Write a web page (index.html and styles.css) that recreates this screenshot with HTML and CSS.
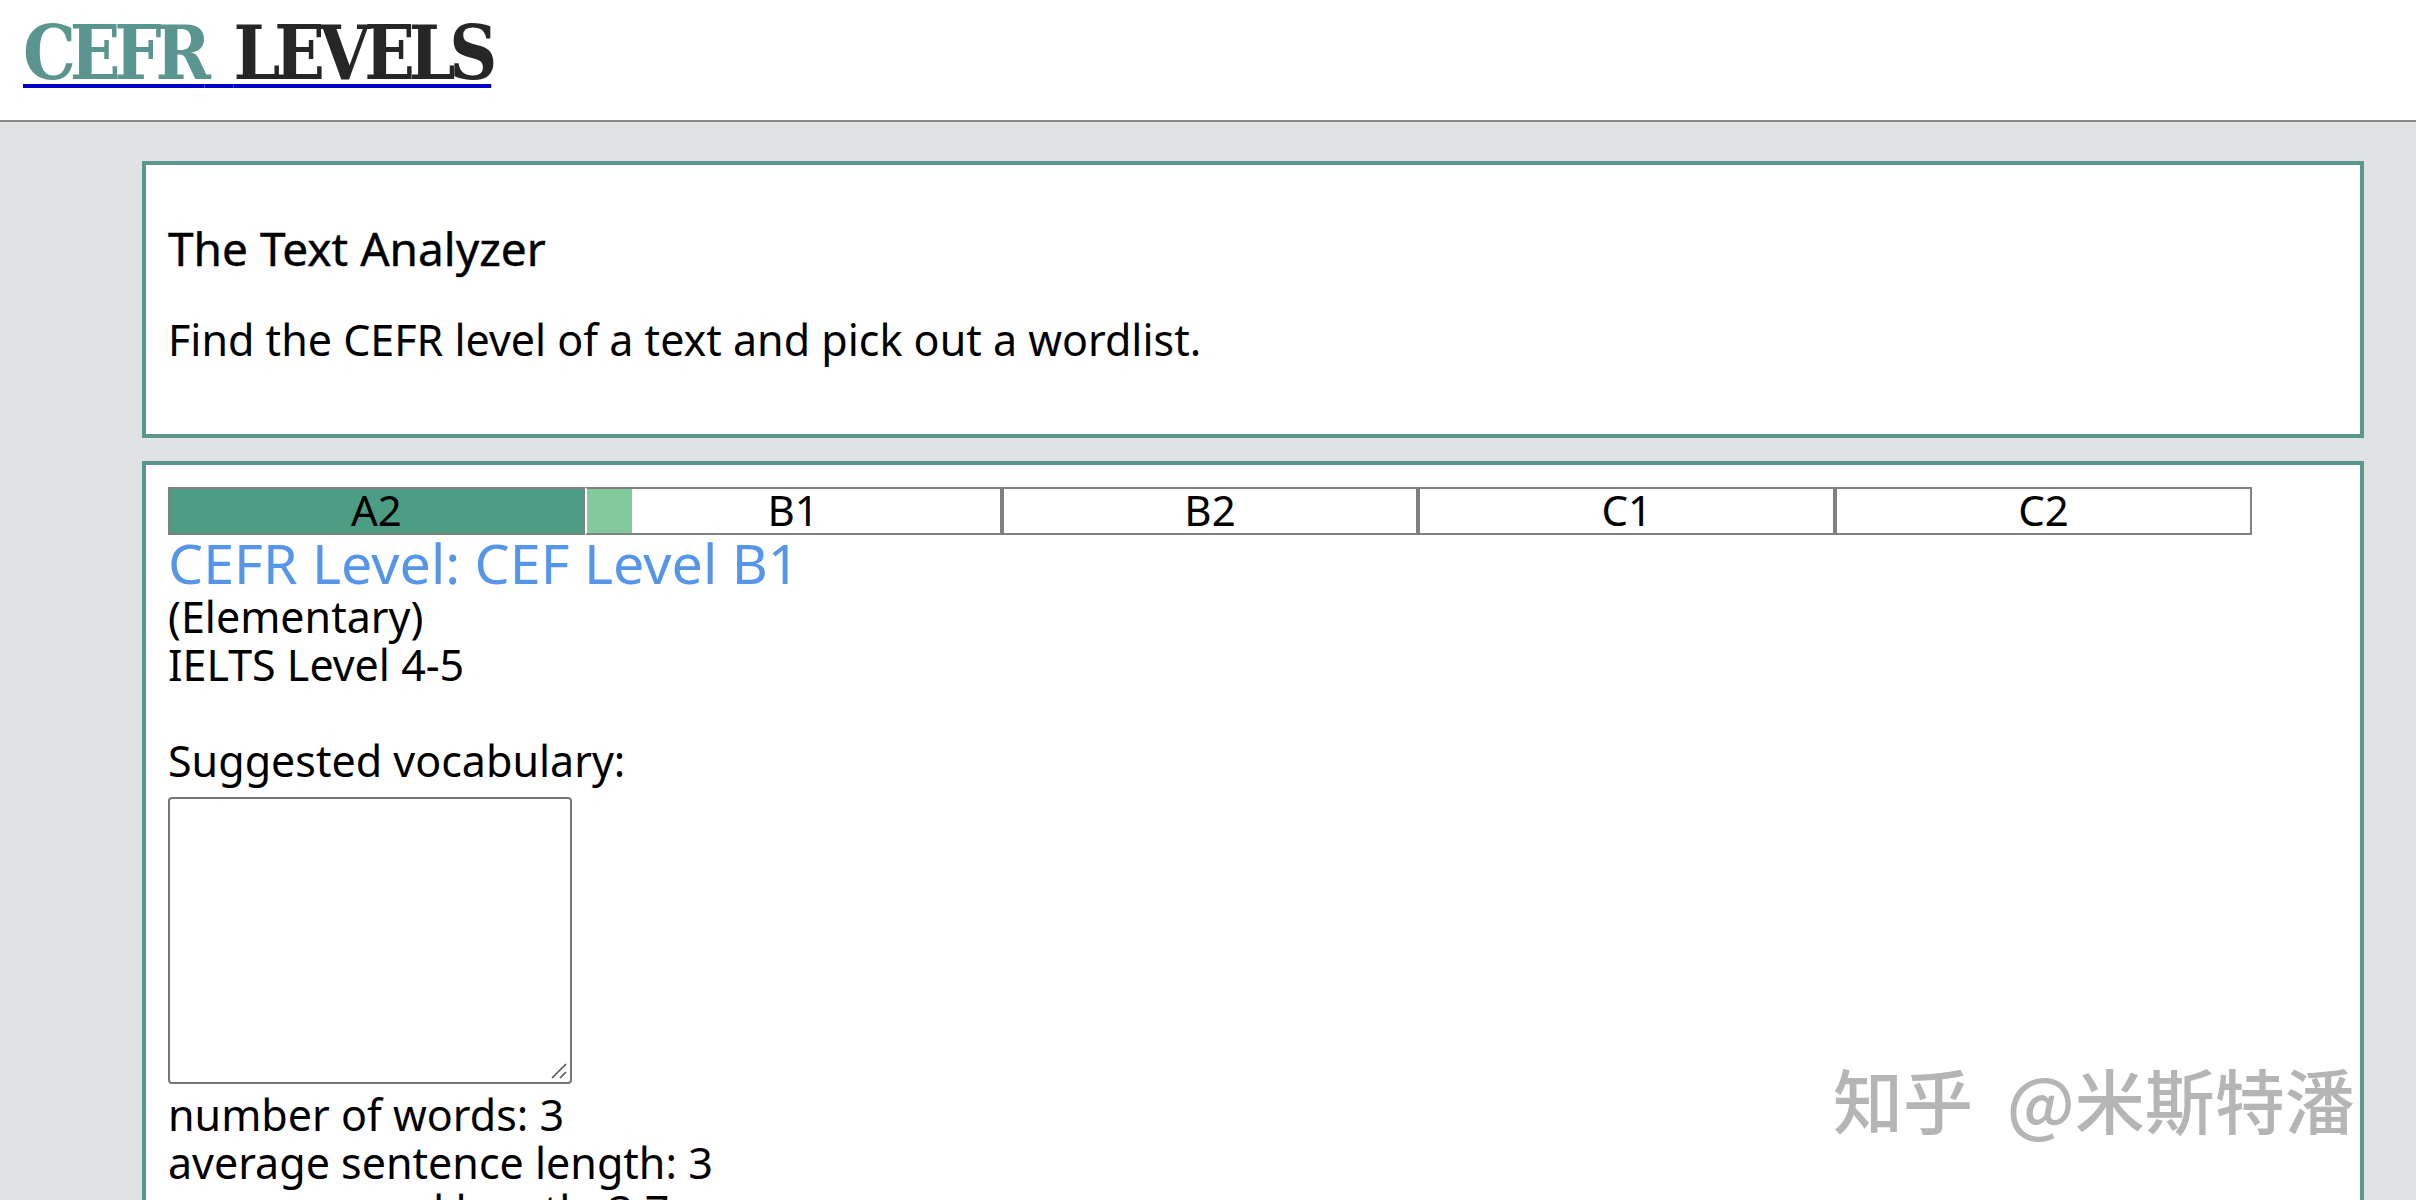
FILE: index.html
```html
<!DOCTYPE html>
<html lang="en">
<head>
<meta charset="utf-8">
<title>CEFR Levels - The Text Analyzer</title>
<link rel="stylesheet" href="styles.css">
</head>
<body>
<header class="site-header">
  <a class="logo" href="#"><span class="logo-a">CEFR</span> <span class="logo-b">LEVELS</span></a>
</header>
<main class="content">
  <section class="card intro">
    <h1 class="intro-title">The Text Analyzer</h1>
    <p class="intro-text">Find the CEFR level of a text and pick out a wordlist.</p>
  </section>
  <section class="card result">
    <div class="levels">
      <div class="level level-full">A2</div>
      <div class="level level-partial"><div class="level-fill"></div><span class="level-name">B1</span></div>
      <div class="level">B2</div>
      <div class="level">C1</div>
      <div class="level">C2</div>
    </div>
    <h2 class="result-title">CEFR Level: CEF Level B1</h2>
    <div>(Elementary)</div>
    <div>IELTS Level 4-5</div>
    <div class="vocab-label">Suggested vocabulary:</div>
    <div class="vocab-wrap">
      <textarea class="vocab"></textarea>
      <svg class="grip" viewBox="0 0 24 24" width="24" height="24" aria-hidden="true"><path d="M4 18 18 4M12 18l6-6"/></svg>
    </div>
    <div>number of words: 3</div>
    <div>average sentence length: 3</div>
    <div>average word length: 3.7</div>
  </section>
</main>
<div class="watermark">知乎 @米斯特潘</div>
</body>
</html>
```
FILE: styles.css
```css
html, body {
  margin: 0;
  height: 1200px;
  overflow: hidden;
}
body {
  position: relative;
  background: #e0e2e3;
  color: #000;
  font-family: "Noto Sans", sans-serif;
  font-size: 43px;
  line-height: 48px;
}
.site-header {
  height: 120px;
  background: #fff;
  border-bottom: 2px solid #888;
  padding-left: 23px;
}
.logo {
  display: inline-block;
  font-family: "DejaVu Serif", serif;
  font-stretch: condensed;
  font-weight: 700;
  font-size: 74px;
  line-height: 106px;
  letter-spacing: -6.2px;
  word-spacing: 12px;
  color: #0000c8;
  text-decoration: underline;
  text-decoration-thickness: 4px;
  text-underline-offset: 5px;
  white-space: nowrap;
}
.logo-a { color: #5a958f; }
.logo-b { color: #262626; }
.content {
  display: flex;
  flex-direction: column;
  gap: 23px;
  padding: 39px 52px 0 142px;
}
.card {
  background: #fff;
  border: 4px solid #5a958f;
  padding: 22px;
}
.intro {
  height: 277px;
  box-sizing: border-box;
}
.intro-title {
  margin: 33px 0 0;
  font-size: 46px;
  font-weight: 400;
  line-height: 56px;
  -webkit-text-stroke: 0.4px #000;
}
.intro-text {
  margin: 36px 0 0;
  font-size: 43px;
  line-height: 56px;
}
.levels {
  display: flex;
  width: 2084px;
  height: 48px;
}
.level {
  position: relative;
  flex: 1;
  border: 2px solid #808080;
  text-align: center;
  line-height: 42px;
  font-size: 42px;
  height: 48px;
  box-sizing: border-box;
}
.level-full {
  background: #4d9c84;
}
.level-partial {
  border-left-color: #fff;
}
.level-fill {
  position: absolute;
  left: 0;
  top: 0;
  bottom: 0;
  width: 45px;
  background: #82c99c;
}
.level-name { position: relative; }
.result-title {
  margin: 0 0 2px;
  font-size: 55.6px;
  font-weight: 400;
  line-height: 56px;
  color: #5596ea;
}
.vocab-label {
  margin-top: 48px;
}
.vocab-wrap {
  position: relative;
  width: 404px;
  margin: 12px 0 7px;
}
.vocab {
  display: block;
  width: 404px;
  height: 287px;
  box-sizing: border-box;
  margin: 0;
  border: 2px solid #777;
  border-radius: 4px;
  background: #fff;
  resize: none;
}
.grip {
  position: absolute;
  right: 0;
  bottom: 0;
  fill: none;
  stroke: #555;
  stroke-width: 1.6;
}
.watermark {
  position: absolute;
  left: 1833px;
  top: 1061px;
  font-family: "Noto Sans CJK SC", sans-serif;
  font-size: 70px;
  font-weight: 500;
  line-height: 76px;
  word-spacing: 18px;
  color: #b5b5b5;
  white-space: nowrap;
}
```
